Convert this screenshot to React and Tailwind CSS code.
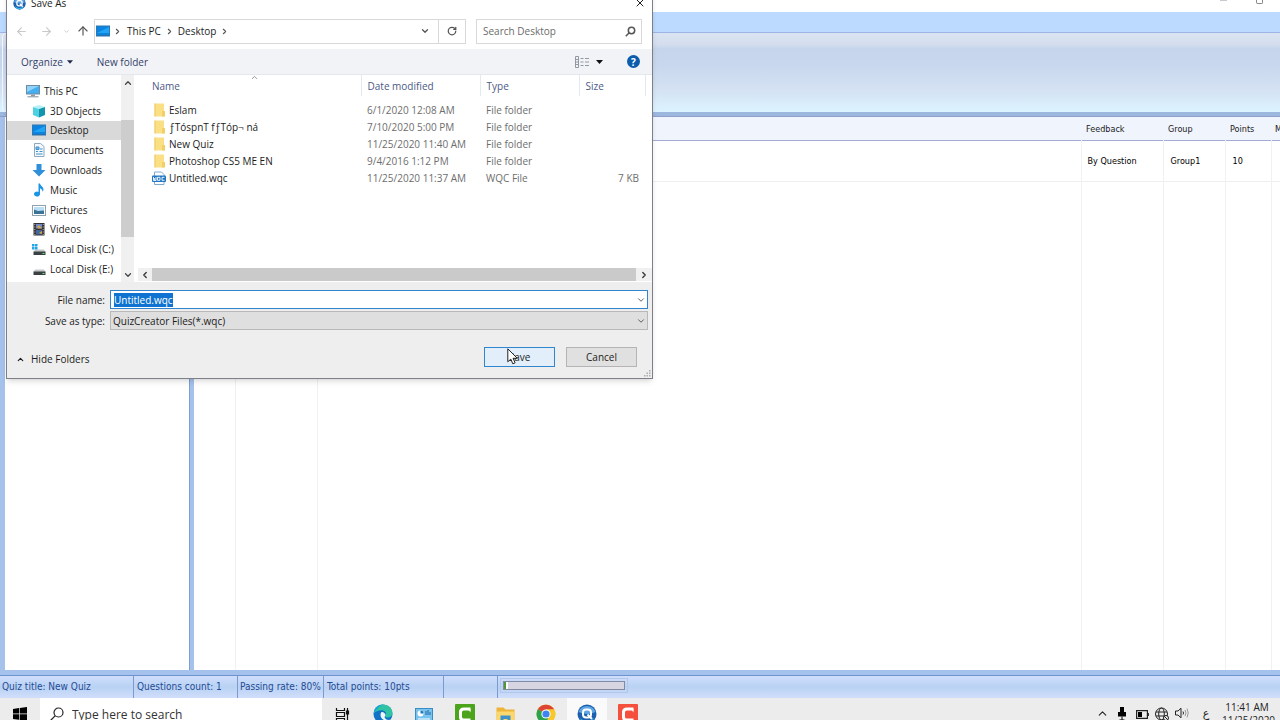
import React, { useEffect, useRef, useState } from 'react';
import { ChevronDown, ChevronLeft, ChevronRight, ChevronUp, ArrowLeft, ArrowRight, ArrowUp, RotateCw, X } from 'lucide-react';

const DesktopIcon = () => (
    <svg width="14" height="14" viewBox="0 0 14 14" className="shrink-0">
        <rect x="0.5" y="2" width="13" height="10" fill="#0a84e0" stroke="#2b78b5" />
        <path d="M1 9 13 3v6z" fill="#22a4f5" />
        <path d="M1 11.5h12" stroke="#2a6fa8" />
    </svg>
);

const PcIcon = () => (
    <svg width="14" height="14" viewBox="0 0 14 14" className="shrink-0">
        <rect x="0.5" y="1.5" width="13" height="8.5" fill="#45aef0" stroke="#6e8ca3" />
        <path d="M1 2h12L1 8z" fill="#8fd2fa" />
        <path d="M5 10.5h4v1.5H5z" fill="#8d9aa5" />
        <path d="M1.5 12.8h11" stroke="#7d8c98" />
    </svg>
);

const CubeIcon = () => (
    <svg width="14" height="14" viewBox="0 0 14 14" className="shrink-0">
        <path d="M1 3 7 1l6 2-6 2z" fill="#b4f1f7" />
        <path d="M1 3l6 2v8.5L1 11z" fill="#4ed2e2" />
        <path d="M13 3 7 5v8.5L13 11z" fill="#1495ad" />
    </svg>
);

const DocumentIcon = () => (
    <svg width="14" height="14" viewBox="0 0 14 14" className="shrink-0">
        <path d="M2.5.5h6L12 3.500V13.500H2.500z" fill="#f2f8fc" stroke="#8ea9bd" />
        <path d="M4 4h3v2.500H4zM8 6h2.500M4 8.500h2M7.500 8.500h3M4 11h6.500" stroke="#3f93cb" fill="#79b8e0" />
    </svg>
);

const DownloadIcon = () => (
    <svg width="14" height="14" viewBox="0 0 14 14" className="shrink-0">
        <path d="M4.500 1h5v6H13.500L7 13.500.5 7h4z" fill="#2f8fdb" />
    </svg>
);

const MusicIcon = () => (
    <svg width="14" height="14" viewBox="0 0 14 14" className="shrink-0">
        <path d="M6.500.5h1.500c.3 2.500 3.500 3 3.500 6 0 1-.4 1.800-1 2.500.3-2-1-3.200-2.500-3.500V11a3 2.500 0 1 1-1.500-2.100z" fill="#1a94e6" />
    </svg>
);

const PictureIcon = () => (
    <svg width="14" height="14" viewBox="0 0 14 14" className="shrink-0">
        <rect x="0.5" y="2.500" width="13" height="10" fill="#fff" stroke="#8fa1ae" />
        <path d="M2 4h10v7H2z" fill="#b9def5" />
        <path d="M2 6.500l4 1.500 6-.5V11H2z" fill="#3b7396" />
    </svg>
);

const VideoIcon = () => (
    <svg width="14" height="14" viewBox="0 0 14 14" className="shrink-0">
        <rect x="1.500" y="1" width="11" height="12.500" fill="#333" />
        <path d="M4 2h6v4.500H4z" fill="#6d87c9" />
        <path d="M4 8h6v4.500H4z" fill="#46659b" />
        <path d="M5 5l2-2 3 3.500H6zM7 11l3-2v3z" fill="#d1a548" />
        <path d="M2.800 2v11M11.200 2v11" stroke="#bbb" strokeDasharray="1 1.500" />
    </svg>
);

const DiskIcon = ({ system }) => (
    <svg width="14" height="14" viewBox="0 0 14 14" className="shrink-0">
        <path d="M3 7.500h9l1.500 2.500h-12z" fill="#c4c8ca" />
        <rect x="1.500" y="9.500" width="12" height="3.500" fill="#3b4042" />
        <rect x="10.500" y="11" width="2" height="1" fill="#6fdc7a" />
        {system && <path d="M0 2h2.500v2.500H0zM3 2h2.500v2.500H3zM0 5h2.500v2.500H0zM3 5h2.500v2.500H3z" fill="#22a6e8" />}
    </svg>
);

const FolderIcon = () => (
    <svg width="14" height="14" viewBox="0 0 14 14" className="shrink-0">
        <path d="M2.500.5h9.500v13H2.500z" fill="#fbdf85" />
        <path d="M10 8h3v5.500h-3z" fill="#f3cf68" />
        <path d="M3 .5v13" stroke="#ecc968" />
    </svg>
);

const WqcIcon = () => (
    <svg width="14" height="14" viewBox="0 0 14 14" className="shrink-0">
        <path d="M2.500 1h7l2.500 2.500v10H2.500z" fill="#fff" stroke="#7fa9cf" />
        <rect x="0" y="4.500" width="14" height="6.500" rx="1" fill="#2277c4" />
        <path d="M1.500 6v3.500h2.500V6M2.700 7v2M5.500 6.300h2.500v3H5.500zM12.500 6.300h-2.500v3h2.500" stroke="#fff" fill="none" strokeWidth=".9" />
    </svg>
);

const QuizLogo = ({ size }) => (
    <svg width={size} height={size} viewBox="0 0 20 20" className="shrink-0">
        <circle cx="10" cy="10" r="9.500" fill="#1b5fae" />
        <path d="M1.500 8a9 9 0 0 1 17 0q-8 4-17 0" fill="#5ea6e3" />
        <path d="M3 14q7 6 14 0-1.500 5-7 5t-7-5" fill="#36b4ee" />
        <rect x="6" y="5.500" width="8" height="8" rx="3" fill="none" stroke="#fff" strokeWidth="2" />
        <path d="M10.500 10.500l4.500 4.500" stroke="#fff" strokeWidth="2" />
    </svg>
);

const places = [
    { name: 'This PC', icon: <PcIcon />, root: true },
    { name: '3D Objects', icon: <CubeIcon /> },
    { name: 'Desktop', icon: <DesktopIcon />, active: true },
    { name: 'Documents', icon: <DocumentIcon /> },
    { name: 'Downloads', icon: <DownloadIcon /> },
    { name: 'Music', icon: <MusicIcon /> },
    { name: 'Pictures', icon: <PictureIcon /> },
    { name: 'Videos', icon: <VideoIcon /> },
    { name: 'Local Disk (C:)', icon: <DiskIcon system /> },
    { name: 'Local Disk (E:)', icon: <DiskIcon /> },
];

const files = [
    { name: 'Eslam', date: '6/1/2020 12:08 AM', type: 'File folder' },
    { name: 'ƒTóspnT fƒTóp¬ ná', date: '7/10/2020 5:00 PM', type: 'File folder' },
    { name: 'New Quiz', date: '11/25/2020 11:40 AM', type: 'File folder' },
    { name: 'Photoshop CS5 ME EN', date: '9/4/2016 1:12 PM', type: 'File folder' },
    { name: 'Untitled.wqc', date: '11/25/2020 11:37 AM', type: 'WQC File', size: '7 KB' },
];

const SaveDialog = () => {
    const [fileName, setFileName] = useState('Untitled.wqc');
    const inputRef = useRef(null);

    useEffect(() => {
        inputRef.current.focus();
        inputRef.current.select();
    }, []);

    return (
        <div role="dialog" aria-label="Save As" className="absolute -top-2 left-[6px] w-[647px] flex flex-col border border-[#7d8089] bg-[#eeeeee] text-[10px] leading-4 text-[#1c1c1c] shadow-md">
            <div className="flex h-5 items-center bg-white px-[6px]">
                <QuizLogo size={13} />
                <span className="ml-[5px]">Save As</span>
                <button aria-label="Close" className="ml-auto"><X size={12} strokeWidth={2} /></button>
            </div>

            {/* Navigation */}
            <div className="flex h-9 items-center bg-white pl-2 pr-[10px]">
                <button aria-label="Back" className="w-[14px] text-[#c9c9c9]"><ArrowLeft size={13} /></button>
                <button aria-label="Forward" className="ml-[11px] w-[14px] text-[#c9c9c9]"><ArrowRight size={13} /></button>
                <button aria-label="Recent locations" className="ml-[9px] text-[#c9c9c9]"><ChevronDown size={7} strokeWidth={3} /></button>
                <button aria-label="Up" className="ml-[6px] w-[14px] text-[#555]"><ArrowUp size={14} /></button>
                <div className="ml-[4px] flex h-[25px] min-w-0 flex-1 items-center border border-[#d9d9d9] pl-px">
                    <DesktopIcon />
                    <ChevronRight size={9} strokeWidth={3} className="ml-[3px] text-[#555]" />
                    <button className="ml-[5px]">This PC</button>
                    <ChevronRight size={9} strokeWidth={3} className="ml-[4px] text-[#555]" />
                    <button className="ml-[4px]">Desktop</button>
                    <ChevronRight size={9} strokeWidth={3} className="ml-[4px] text-[#555]" />
                    <button aria-label="Previous locations" className="ml-auto flex h-full w-[26px] items-center justify-center text-[#555]"><ChevronDown size={10} strokeWidth={3} /></button>
                    <button aria-label="Refresh" className="flex h-full w-[27px] items-center justify-center border-l border-[#d9d9d9] text-[#555]"><RotateCw size={10} strokeWidth={3} /></button>
                </div>
                <div className="ml-[10px] flex h-[25px] w-[166px] items-center border border-[#d9d9d9] pl-[6px] pr-[5px]">
                    <input aria-label="Search Desktop" placeholder="Search Desktop" className="min-w-0 flex-1 outline-none placeholder:text-[#6b6b6b]" />
                    <svg width="11" height="11" viewBox="0 0 11 11" fill="none" stroke="#555" strokeWidth="1.500">
                        <circle cx="6.500" cy="4.500" r="3.200" />
                        <path d="M4.200 6.800.8 10.200" />
                    </svg>
                </div>
            </div>

            {/* Toolbar */}
            <div className="flex h-[26px] items-center border-b border-[#e4e7ec] bg-[#f2f3f7] pl-[14px] pr-3 text-[#34406b]">
                <button className="flex items-center gap-[4px]">
                    Organize
                    <svg width="6" height="4" viewBox="0 0 7 4"><path d="M0 0h7L3.500 4z" fill="#1f2a4d" /></svg>
                </button>
                <button className="ml-[24px]">New folder</button>
                <button aria-label="Change your view" className="ml-auto flex items-center gap-[7px]">
                    <svg width="14" height="12" viewBox="0 0 14 12" fill="none" stroke="#9299a3">
                        <path d="M.5.5h3v11h-3zM.5 3.500h3M.5 6h3M.5 8.500h3" />
                        <path d="M5.500 2.500h3M10 2.500h4M5.500 6h3M10 6h4M5.500 9.500h3M10 9.500h4" />
                    </svg>
                    <svg width="7" height="4" viewBox="0 0 7 4"><path d="M0 0h7L3.500 4z" fill="#111" /></svg>
                </button>
                <button aria-label="Help" className="ml-6 flex h-[13px] w-[13px] items-center justify-center rounded-full bg-[#0b5cad] text-[10px] font-bold text-white">?</button>
            </div>

            <div className="flex h-[207px]">
                <nav className="flex w-[114px] flex-col bg-white pt-[6px] pb-[3px]">
                    {places.map((place) => (
                        <a
                            key={place.name}
                            href="#"
                            className={`flex min-h-0 flex-1 items-center gap-1 whitespace-nowrap ${place.root ? 'pl-[19px]' : 'pl-[25px]'} ${place.active ? 'bg-[#d9d9d9]' : ''}`}
                        >
                            {place.icon}
                            {place.name}
                        </a>
                    ))}
                </nav>
                <div className="flex w-[13px] flex-col items-center bg-[#f0f0f0] text-[#444]">
                    <button aria-label="Scroll up" className="flex h-[15px] items-center"><ChevronUp size={10} strokeWidth={3} /></button>
                    <div className="mt-[30px] h-[117px] w-full bg-[#cdcdcd]" />
                    <button aria-label="Scroll down" className="mt-auto flex h-[15px] items-center"><ChevronDown size={10} strokeWidth={3} /></button>
                </div>

                <div className="relative flex min-w-0 flex-1 flex-col bg-white pl-1">
                    <ChevronUp size={9} strokeWidth={2} className="absolute left-[116px] -top-[2px] text-[#777]" />
                    <table className="w-full table-fixed border-collapse text-left">
                        <colgroup>
                            <col className="w-[223px]" />
                            <col className="w-[119px]" />
                            <col className="w-[99px]" />
                            <col className="w-[66px]" />
                            <col />
                        </colgroup>
                        <thead className="text-[#4c5a85]">
                            <tr className="h-[21px]">
                                <th className="border-r border-[#e3e9f1] p-0 pl-[14px] font-normal">Name</th>
                                <th className="border-r border-[#e3e9f1] p-0 pl-[6px] font-normal">Date modified</th>
                                <th className="border-r border-[#e3e9f1] p-0 pl-[6px] font-normal">Type</th>
                                <th className="border-r border-[#e3e9f1] p-0 pl-[6px] font-normal">Size</th>
                                <td className="p-0" />
                            </tr>
                        </thead>
                        <tbody className="text-[#6d6d6d]">
                            <tr className="h-[5px]"><td colSpan={5} className="p-0" /></tr>
                            {files.map((file) => (
                                <tr key={file.name} className="h-[17px] whitespace-nowrap">
                                    <td className="p-0 pl-[14px]">
                                        <div className="flex items-center gap-[3px] text-[#1c1c1c]">
                                            {file.size ? <WqcIcon /> : <FolderIcon />}
                                            {file.name}
                                        </div>
                                    </td>
                                    <td className="p-0 pl-[6px]">{file.date}</td>
                                    <td className="p-0 pl-[6px]">{file.type}</td>
                                    <td className="p-0 pr-[6px] text-right">{file.size}</td>
                                    <td className="p-0" />
                                </tr>
                            ))}
                        </tbody>
                    </table>
                    <div className="mt-auto mb-px flex h-[13px] items-center bg-[#f0f0f0] text-[#333]">
                        <button aria-label="Scroll left" className="flex w-[14px] justify-center"><ChevronLeft size={10} strokeWidth={3} /></button>
                        <div className="h-full flex-1 bg-[#cacaca]" />
                        <button aria-label="Scroll right" className="flex w-[16px] justify-center"><ChevronRight size={10} strokeWidth={3} /></button>
                    </div>
                </div>
            </div>

            {/* File name and type */}
            <div className="mt-2 grid grid-cols-[98px_1fr] items-center gap-x-[5px] gap-y-[2px] pr-[4px]">
                <label htmlFor="file-name" className="text-right">File name:</label>
                <div className="flex h-[19px] items-center border border-[#2f86cf] bg-white">
                    <input
                        id="file-name"
                        ref={inputRef}
                        value={fileName}
                        onChange={(e) => setFileName(e.target.value)}
                        className="h-[14px] min-w-0 flex-1 pl-[3px] outline-none selection:bg-[#0f74d1] selection:text-white"
                    />
                    <ChevronDown size={10} strokeWidth={2} className="mr-px text-[#444]" />
                </div>
                <label htmlFor="file-type" className="text-right">Save as type:</label>
                <div className="flex h-[19px] items-center border border-[#b8b8b8] bg-[#dfdfdf]">
                    <select id="file-type" className="min-w-0 flex-1 appearance-none pl-[2px] outline-none">
                        <option>QuizCreator Files(*.wqc)</option>
                    </select>
                    <ChevronDown size={10} strokeWidth={2} className="mr-px text-[#444]" />
                </div>
            </div>

            <div className="relative mt-[17px] flex h-[31px] items-start pl-[9px] pr-[15px]">
                <button className="mt-[4px] flex items-center gap-[6px]">
                    <ChevronUp size={9} strokeWidth={3} />
                    Hide Folders
                </button>
                <button className="ml-auto h-5 w-[71px] border border-[#2f86cf] bg-[#e2effa]">Save</button>
                <button className="ml-[11px] h-5 w-[71px] border border-[#b4b4b4] bg-[#e0e0e0]">Cancel</button>
                <svg width="7" height="7" viewBox="0 0 7 7" className="absolute bottom-[1px] right-[1px]" fill="#adadad">
                    <path d="M5 0h1.500v1.500H5zM2.500 2.500h1.500v1.500H2.500zM5 2.500h1.500v1.500H5zM0 5h1.500v1.500H0zM2.500 5h1.500v1.500H2.500zM5 5h1.500v1.500H5z" />
                </svg>
            </div>
        </div>
    );
};

const QuestionTable = () => (
    <table className="h-full w-full table-fixed border-collapse text-left text-[9px] text-[#222] font-['DejaVu_Sans_Condensed','Liberation_Sans',sans-serif]">
        <colgroup>
            <col className="w-[41px]" />
            <col className="w-[82px]" />
            <col />
            <col className="w-[82px]" />
            <col className="w-[62px]" />
            <col className="w-[46px]" />
            <col className="w-[9px]" />
        </colgroup>
        <thead>
            <tr className="h-[23px] border-b border-[#a3abd6] bg-[#f0f4fc]">
                <th className="p-0" colSpan={3} />
                <th className="p-0 pt-[2px] pl-[5px] font-normal">Feedback</th>
                <th className="p-0 pt-[2px] pl-[5px] font-normal">Group</th>
                <th className="p-0 pt-[2px] pl-[5px] font-normal">Points</th>
                <th className="p-0 pt-[2px] pl-[4px] font-normal">M</th>
            </tr>
        </thead>
        <tbody>
            <tr className="h-[41px] border-b border-[#efefef] text-black">
                <td className="border-r border-[#f1f1f1] p-0" />
                <td className="border-r border-[#f1f1f1] p-0" />
                <td className="border-r border-[#f1f1f1] p-0" />
                <td className="border-r border-[#f1f1f1] p-0 pt-[2px] pl-[6px] whitespace-nowrap">By Question</td>
                <td className="border-r border-[#f1f1f1] p-0 pt-[2px] pl-[7px]">Group1</td>
                <td className="border-r border-[#f1f1f1] p-0 pt-[2px] pl-[7px]">10</td>
                <td className="p-0" />
            </tr>
            <tr>
                <td className="border-r border-[#f1f1f1] p-0" />
                <td className="border-r border-[#f1f1f1] p-0" />
                <td className="border-r border-[#f1f1f1] p-0" />
                <td className="border-r border-[#f1f1f1] p-0" />
                <td className="border-r border-[#f1f1f1] p-0" />
                <td className="border-r border-[#f1f1f1] p-0" />
                <td className="p-0" />
            </tr>
        </tbody>
    </table>
);

const StatusBar = () => (
    <footer className="flex h-[23px] shrink-0 items-stretch border-t border-[#6f93cf] bg-linear-to-b from-[#d0defd] via-[#b9d2f3] to-[#d0defb] text-[10px] leading-[21px] text-[#1f4a94] font-['DejaVu_Sans_Condensed','Liberation_Sans',sans-serif]">
        <span className="w-[134px] border-r border-[#7b9bcf] pl-[2px]">Quiz title: New Quiz</span>
        <span className="w-[104px] border-r border-[#7b9bcf] pl-[3px]">Questions count: 1</span>
        <span className="w-[86px] border-r border-[#7b9bcf] pl-[2px] whitespace-nowrap">Passing rate: 80%</span>
        <span className="w-[120px] border-r border-[#7b9bcf] pl-[3px]">Total points: 10pts</span>
        <span className="w-[54px] border-r border-[#7b9bcf]" />
        <span className="my-[2px] ml-[2px] mb-[5px] flex border border-[#b3c7ea] p-[2px]">
            <span className="flex h-[9px] w-[122px] self-center border border-[#8389a0] bg-[#d8d5e2]">
                <span className="w-[2px] bg-[#4b9a35]" />
                <span className="w-[2px] bg-white" />
            </span>
        </span>
    </footer>
);

const TaskViewIcon = () => (
    <svg width="15" height="15" viewBox="0 0 15 15" fill="none" stroke="#111" strokeWidth="1.200">
        <path d="M1.500 1v2.500h8V1M1.500 14v-2.500h8V14M1.500 5.500h8v4h-8zM12.500 1v13" />
        <path d="M11.500 4h2v3h-2z" fill="#111" />
    </svg>
);

const EdgeIcon = () => (
    <svg width="20" height="20" viewBox="0 0 20 20">
        <circle cx="10" cy="10" r="9.500" fill="#1173c6" />
        <path d="M.6 9.500C1.500 3.500 5.500.5 10 .5c5.500 0 9.500 4 9.500 8.500 0 3-2.500 4.500-5 4.500s-3-1-2-2.200c1.500-2-.5-5-4-5-3.500 0-6.500 1.500-7.900 3.200z" fill="#2fc3a4" />
        <path d="M.6 9.500C1.500 3.500 5.500.5 10 .5c-3 1-6 4-9.400 9z" fill="#1ba3d8" />
        <path d="M8.500 8c-2 2.500-1 7 3.500 8.500 2.500.8 4.500.2 6-1-2 1-5.500.5-6.300-2-.4-1 .8-1.700.8-2.500 0-2-2.500-3.500-4-3z" fill="#eef6fa" />
    </svg>
);

const PanelIcon = () => (
    <svg width="18" height="18" viewBox="0 0 18 18">
        <rect x="0.5" y="3.500" width="17" height="13" fill="#79c3ef" stroke="#3a8dc4" />
        <circle cx="5.500" cy="8.500" r="3" fill="#fff" />
        <path d="M5.500 8.500v-3a3 3 0 0 1 3 3z" fill="#1e77b5" />
        <path d="M11 6v4M13 5v5M15 7v3" stroke="#1e67a5" />
        <path d="M3 14h12" stroke="#fff" />
    </svg>
);

const CamtasiaIcon = ({ red }) => (
    <svg width="20" height="20" viewBox="0 0 20 20">
        <rect width="20" height="20" rx="1" fill={red ? '#f4503d' : '#4ba41c'} />
        <path d="M15.500 5H9Q5.500 5 5.500 8v5q0 3 3.500 3h6.500" fill="none" stroke="#fff" strokeWidth="3" />
        <path d="M13 5h2.500v3.500z" fill="#fff" />
    </svg>
);

const ExplorerIcon = () => (
    <svg width="19" height="18" viewBox="0 0 19 18">
        <path d="M.5 2.500h7l2 2h9V17H.5z" fill="#eeb437" />
        <path d="M.5 6.500h18V17H.5z" fill="#fbd86f" />
        <path d="M4.500 17V10.500h10V17h-3v-3h-4v3z" fill="#3e92cc" />
    </svg>
);

const ChromeIcon = () => (
    <svg width="20" height="20" viewBox="0 0 20 20">
        <circle cx="10" cy="10" r="9.500" fill="#f8c82b" />
        <path d="M10 10 1.800 5.200A9.500 9.500 0 0 1 18.200 5.500H10z" fill="#dd4435" />
        <path d="M10 10 1.800 5.200A9.500 9.500 0 0 0 9 19.500l5-7.200z" fill="#2ba24c" />
        <path d="M10 5.500h8.200A9.500 9.500 0 0 1 9 19.500l5-7.200z" fill="#f8c82b" />
        <circle cx="10" cy="10" r="4.600" fill="#fff" />
        <circle cx="10" cy="10" r="3.600" fill="#3f83ee" />
    </svg>
);

const apps = [
    { name: 'Task View', icon: <TaskViewIcon /> },
    { name: 'Microsoft Edge', icon: <EdgeIcon /> },
    { name: 'Control Panel', icon: <PanelIcon /> },
    { name: 'Camtasia', icon: <CamtasiaIcon /> },
    { name: 'File Explorer', icon: <ExplorerIcon /> },
    { name: 'Google Chrome', icon: <ChromeIcon /> },
    { name: 'QuizCreator', icon: <QuizLogo size={20} />, active: true },
    { name: 'Camtasia Recorder', icon: <CamtasiaIcon red /> },
];

const Taskbar = () => (
    <div className="h-[22px] shrink-0 overflow-hidden bg-[#ececec] text-[#222]">
        <div className="flex h-8 items-center">
            <button aria-label="Start" className="flex h-full w-10 items-center justify-center">
                <svg width="14" height="14" viewBox="0 0 14 14"><path d="M0 2l6-.9v5.500H0zM6.700 1 14 0v6.600H6.700zM0 7.300h6v5.500L0 12zM6.700 7.300H14V14l-7.300-1z" /></svg>
            </button>
            <label className="flex h-full w-[282px] items-center bg-white pl-[10px]">
                <svg width="14" height="14" viewBox="0 0 14 14" fill="none" stroke="#222" strokeWidth="1.200">
                    <circle cx="8.500" cy="5.500" r="4.500" />
                    <path d="M5.300 8.700.5 13.500" />
                </svg>
                <input aria-label="Type here to search" placeholder="Type here to search" className="ml-2 min-w-0 flex-1 pt-px text-[12px] outline-none placeholder:text-[#333]" />
            </label>
            <div className="flex h-full w-[326px]">
                {apps.map((app) => (
                    <button key={app.name} aria-label={app.name} className={`flex h-full flex-1 items-center justify-center ${app.active ? 'bg-[#fafafa]' : ''}`}>
                        {app.icon}
                    </button>
                ))}
            </div>
            <div className="ml-auto flex items-center pr-2">
                <div className="flex">
                    <button aria-label="Show hidden icons" className="flex w-5 justify-center"><ChevronUp size={13} strokeWidth={2} /></button>
                    <button aria-label="Microphone" className="flex w-5 justify-center">
                        <svg width="10" height="14" viewBox="0 0 10 14"><path d="M3 0h4v8H3z" /><path d="M1 5h8v4.500H1z" /><path d="M5 9.500V13M2.500 13h5" fill="none" stroke="#000" /></svg>
                    </button>
                    <button aria-label="Battery" className="flex w-5 items-center justify-center">
                        <svg width="13" height="9" viewBox="0 0 13 9"><path d="M.6.6h10.800v7.800H.6zM12.300 3v3" fill="none" stroke="#222" strokeWidth="1.200" /><path d="M2 2h4v5H2z" /></svg>
                    </button>
                    <button aria-label="Network" className="flex w-5 justify-center">
                        <svg width="14" height="14" viewBox="0 0 14 14" fill="none" stroke="#222">
                            <circle cx="6.500" cy="7" r="6" />
                            <ellipse cx="6.500" cy="7" rx="2.800" ry="6" />
                            <path d="M1 5h11M1 9h11" />
                            <circle cx="11" cy="11" r="2.500" fill="#ececec" />
                            <path d="M9.300 9.300l3.400 3.400" />
                        </svg>
                    </button>
                    <button aria-label="Volume" className="flex w-5 justify-center">
                        <svg width="14" height="12" viewBox="0 0 14 12" fill="none" stroke="#222">
                            <path d="M.5 4h2.500l3-2.800v9.600L3 8H.5z" />
                            <path d="M8 4.500q1 1.500 0 3" />
                            <path d="M10 3q2 3 0 6M12 1.500q2.500 4.500 0 9" stroke="#999" />
                        </svg>
                    </button>
                </div>
                <button aria-label="Arabic keyboard" className="ml-[9px] w-[10px] text-[11px] font-['DejaVu_Sans',sans-serif]">ع</button>
                <div className="ml-[11px] w-[50px] text-center text-[10px] leading-[13px] whitespace-nowrap">
                    <div>11:41 AM</div>
                    <div>11/25/2020</div>
                </div>
            </div>
        </div>
    </div>
);

const App = () => {
    return (
        <div className="relative flex h-screen flex-col overflow-hidden bg-[#a5c2ec] font-['Open_Sans','Noto_Sans',sans-serif]">
            {/* Title bar */}
            <div className="flex h-3 shrink-0 items-start justify-end overflow-hidden bg-white pr-[17px]">
                <button aria-label="Minimize" className="mr-[29px] h-px w-[7px] bg-[#c8c8d0]" />
                <button aria-label="Restore" className="h-[4px] w-[7px] rounded-b-xs border border-t-0 border-[#888]" />
            </div>
            <div className="h-5 shrink-0 bg-[#bcd9ff]" />
            <div className="h-[80px] shrink-0 border-t border-[#9db5e6] bg-[linear-gradient(#d9e3f2_0%,#d3dded_15%,#c6d5ec_20%,#c8d7ed_40%,#d5e3f4_75%,#dcf4ff_100%)] pl-[2px]">
                <div className="h-full w-[600px] rounded border border-[#f2f7ff]" />
            </div>
            <div className="h-[5px] shrink-0 border-b border-[#8f9fcc] bg-[#9cb8df]" />

            <main className="flex min-h-0 flex-1 gap-1 pb-[5px] pl-[5px]">
                <aside className="w-[185px] shrink-0 border-r border-[#7d9dd3] bg-white" />
                <section className="min-w-0 flex-1 overflow-hidden bg-white">
                    <QuestionTable />
                </section>
            </main>

            <StatusBar />
            <Taskbar />
            <SaveDialog />

            {/* Mouse pointer */}
            <svg width="13" height="18" viewBox="0 0 13 18" className="pointer-events-none absolute left-[507px] top-[348px]">
                <path d="M.8.8v13l3-2.700 2 4.700 2.300-1-2-4.500h4.200z" fill="#fff" stroke="#222" />
            </svg>
        </div>
    );
};

export default App;
